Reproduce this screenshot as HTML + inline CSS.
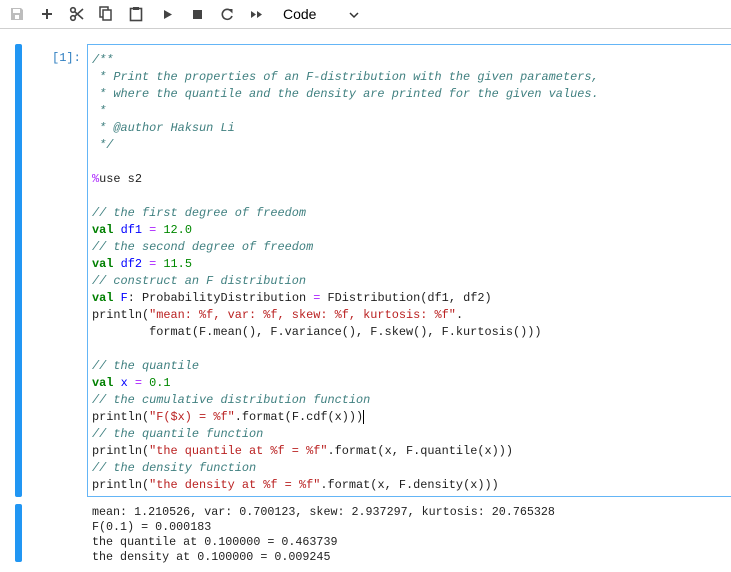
<!DOCTYPE html>
<html><head><meta charset="utf-8"><style>
*{margin:0;padding:0;box-sizing:border-box}
body{width:731px;height:572px;background:#fff;position:relative;overflow:hidden;font-family:"Liberation Mono",monospace}
.tb{position:absolute;left:0;top:0;width:731px;height:29px;border-bottom:1px solid #cfcfcf;background:#fff}
.ic{position:absolute;top:6px}
.code{position:absolute;left:87px;top:44px;width:650px;height:453px;border:1px solid #64b5f6;background:#fff}
.bar{position:absolute;left:15px;width:7px;background:#2196f3;border-radius:2px}
pre{font-family:"Liberation Mono",monospace;font-size:11.9px;white-space:pre;color:#212121}
.src{position:absolute;left:92px;top:52px;line-height:17px}
.out{position:absolute;left:92px;top:505px;line-height:15px;font-size:11.7px;color:#222}
.c{color:#408080;font-style:italic}
.k{color:#008000;font-weight:bold}
.v{color:#0000ff}
.o{color:#aa22ff}
.n{color:#008800}
.s{color:#ba2121}
.m{color:#aa22ff}
.p{position:absolute;left:52px;top:51px;font-size:12px;color:#307fc1;font-family:"Liberation Mono",monospace}
</style></head><body>
<div class="tb">
<svg class="ic" style="left:10px" width="14" height="16" viewBox="0 0 14 16"><path d="M1 2h10l2 2v10H1z" fill="#bdbdbd"/><rect x="3" y="3" width="7" height="4" fill="#fff"/><rect x="5" y="9" width="4" height="4" fill="#fff"/></svg>
<svg class="ic" style="left:40px" width="14" height="16" viewBox="0 0 14 16"><path d="M7 3v10M2 8h10" stroke="#444" stroke-width="2"/></svg>
<svg class="ic" style="left:69px" width="16" height="16" viewBox="0 0 16 16"><circle cx="4" cy="4" r="2.3" fill="none" stroke="#444" stroke-width="1.6"/><circle cx="4" cy="12" r="2.3" fill="none" stroke="#444" stroke-width="1.6"/><path d="M5.5 5.5L14 13M5.5 10.5L14 3" stroke="#444" stroke-width="1.6"/></svg>
<svg class="ic" style="left:99px" width="14" height="16" viewBox="0 0 14 16"><rect x="1" y="1" width="8" height="10" fill="none" stroke="#444" stroke-width="1.5"/><rect x="4" y="4" width="8" height="10" fill="#fff" stroke="#444" stroke-width="1.5"/></svg>
<svg class="ic" style="left:129px" width="14" height="16" viewBox="0 0 14 16"><rect x="1.5" y="2.5" width="11" height="12" fill="none" stroke="#444" stroke-width="1.6"/><rect x="4" y="1" width="6" height="3" fill="#444"/></svg>
<svg class="ic" style="left:162px" width="12" height="16" viewBox="0 0 12 16"><path d="M2 4l8 4.5-8 4.5z" fill="#444"/></svg>
<svg class="ic" style="left:192px" width="12" height="16" viewBox="0 0 12 16"><rect x="1" y="4" width="9" height="9" fill="#444"/></svg>
<svg class="ic" style="left:220px" width="14" height="16" viewBox="0 0 14 16"><path d="M11 5A5 5 0 1 0 12 10" fill="none" stroke="#444" stroke-width="1.6"/><path d="M8 3h4.5v4.5z" fill="#444"/></svg>
<svg class="ic" style="left:250px" width="14" height="16" viewBox="0 0 14 16"><path d="M1 5l5 3.5-5 3.5zM7 5l5 3.5-5 3.5z" fill="#444"/></svg>
<div style="position:absolute;left:283px;top:6px;font-family:'Liberation Sans',sans-serif;font-size:14px;color:#000">Code</div>
<svg style="position:absolute;left:348px;top:10px" width="12" height="10" viewBox="0 0 12 10"><path d="M2 3l4 4 4-4" fill="none" stroke="#333" stroke-width="1.5"/></svg>
</div>
<div class="bar" style="top:44px;height:453px"></div>
<div class="bar" style="top:504px;height:58px"></div>
<div class="p">[1]:</div>
<div class="code"></div>
<pre class="src"><span class="c">/**
 * Print the properties of an F-distribution with the given parameters,
 * where the quantile and the density are printed for the given values.
 *
 * @author Haksun Li
 */</span>

<span class="m">%</span>use s2

<span class="c">// the first degree of freedom</span>
<span class="k">val</span> <span class="v">df1</span> <span class="o">=</span> <span class="n">12.0</span>
<span class="c">// the second degree of freedom</span>
<span class="k">val</span> <span class="v">df2</span> <span class="o">=</span> <span class="n">11.5</span>
<span class="c">// construct an F distribution</span>
<span class="k">val</span> <span class="v">F</span>: ProbabilityDistribution <span class="o">=</span> FDistribution(df1, df2)
println(<span class="s">"mean: %f, var: %f, skew: %f, kurtosis: %f"</span>.
        format(F.mean(), F.variance(), F.skew(), F.kurtosis()))

<span class="c">// the quantile</span>
<span class="k">val</span> <span class="v">x</span> <span class="o">=</span> <span class="n">0.1</span>
<span class="c">// the cumulative distribution function</span>
println(<span class="s">"F($x) = %f"</span>.format(F.cdf(x)))<span style="border-left:1px solid #000"></span>
<span class="c">// the quantile function</span>
println(<span class="s">"the quantile at %f = %f"</span>.format(x, F.quantile(x)))
<span class="c">// the density function</span>
println(<span class="s">"the density at %f = %f"</span>.format(x, F.density(x)))</pre>
<pre class="out">mean: 1.210526, var: 0.700123, skew: 2.937297, kurtosis: 20.765328
F(0.1) = 0.000183
the quantile at 0.100000 = 0.463739
the density at 0.100000 = 0.009245</pre>
</body></html>
